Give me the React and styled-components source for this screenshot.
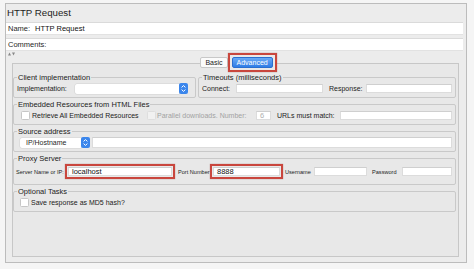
import React from "react";
import styled, { createGlobalStyle } from "styled-components";

const GlobalStyle = createGlobalStyle`
  html, body {
    margin: 0;
    padding: 0;
    background: #f5f5f5;
  }
  body {
    font-family: "Liberation Sans", Arial, sans-serif;
    color: #1f1f1f;
  }
`;

function Stepper() {
  return (
    <svg width="9" height="11" viewBox="0 0 9 11">
      <rect x="0" y="0" width="9" height="11" rx="2" fill="#3b86ec" />
      <path d="M2.6 4.4 L4.5 2.6 L6.4 4.4" stroke="#fff" strokeWidth="1" fill="none" />
      <path d="M2.6 6.6 L4.5 8.4 L6.4 6.6" stroke="#fff" strokeWidth="1" fill="none" />
    </svg>
  );
}

function App() {
  return (
    <>
      <GlobalStyle />
      <Window>
        <Panel>
          <Title>HTTP Request</Title>
          <TextRow>
            <RowLabel>Name:</RowLabel>
            <RowValue>HTTP Request</RowValue>
          </TextRow>
          <TextRow $gap={3}>
            <RowLabel>Comments:</RowLabel>
          </TextRow>
          <Spinner>
            <svg width="7" height="4" viewBox="0 0 7 4">
              <path d="M0 3.5 L1.5 0.5 L3 3.5 Z" fill="#888" />
              <path d="M4 0.5 L7 0.5 L5.5 3.5 Z" fill="#888" />
            </svg>
          </Spinner>
          <TabBar>
            <Tab>Basic</Tab>
            <Highlight $pad={2}>
              <Tab $active>Advanced</Tab>
            </Highlight>
          </TabBar>
          <TabPane>
            <Row $gap={2}>
              <Group $width={183}>
                <Legend>Client implementation</Legend>
                <Line>
                  <Label $w={58}>Implementation:</Label>
                  <Select $w={113}>
                    <SelectBox />
                    <Stepper />
                  </Select>
                </Line>
              </Group>
              <Group $grow>
                <Legend>Timeouts (milliseconds)</Legend>
                <Line $left={0}>
                  <Label $w={34}>Connect:</Label>
                  <Field $w={87} />
                  <Label $w={37} $ml={6}>Response:</Label>
                  <Field $grow />
                </Line>
              </Group>
            </Row>
            <Group>
              <Legend>Embedded Resources from HTML Files</Legend>
              <Line $left={4}>
                <Check />
                <Label $w={115} $ml={2}>Retrieve All Embedded Resources</Label>
                <Check $disabled />
                <Label $w={99} $ml={1} $muted>Parallel downloads. Number:</Label>
                <Field $w={15} $muted>6</Field>
                <Label $w={63} $ml={6}>URLs must match:</Label>
                <Field $grow />
              </Line>
            </Group>
            <Group>
              <Legend>Source address</Legend>
              <Line $left={3}>
                <Select $w={70}>
                  <SelectBox>IP/Hostname</SelectBox>
                  <Stepper />
                </Select>
                <Field $grow $ml={2} $h={11} />
              </Line>
            </Group>
            <Group $bottom={5}>
              <Legend>Proxy Server</Legend>
              <Line $left={-1}>
                <SmallLabel $w={49}>Server Name or IP:</SmallLabel>
                <Highlight $w={110}>
                  <Field $grow>localhost</Field>
                </Highlight>
                <SmallLabel $w={32} $ml={3}>Port Number:</SmallLabel>
                <Highlight $w={73}>
                  <Field $grow>8888</Field>
                </Highlight>
                <SmallLabel $w={29} $ml={2}>Username</SmallLabel>
                <Field $w={53} />
                <SmallLabel $w={30} $ml={5}>Password</SmallLabel>
                <Field $grow />
              </Line>
            </Group>
            <Group>
              <Legend>Optional Tasks</Legend>
              <Line $left={3}>
                <Check />
                <Label $ml={2}>Save response as MD5 hash?</Label>
              </Line>
            </Group>
          </TabPane>
        </Panel>
      </Window>
    </>
  );
}

export default App;

const Window = styled.div`
  height: 269px;
  box-sizing: border-box;
  padding: 3px 7px 6px 5px;
  display: flex;
`;

const Panel = styled.div`
  flex: 1;
  display: flex;
  flex-direction: column;
  border: 1px solid #bcbcbc;
  background: #ececec;
  padding: 0 3px 5px 0;
`;

const Title = styled.div`
  height: 18px;
  line-height: 18px;
  padding-left: 1px;
  font-size: 9.7px;
  color: #1d1d1d;
`;

const TextRow = styled.div`
  display: flex;
  align-items: center;
  height: 11px;
  margin-top: ${(p) => p.$gap || 0}px;
  background: #fff;
  border-top: 1px solid #dadada;
  border-bottom: 1px solid #e2e2e2;
  font-size: 7.5px;
  padding-left: 2px;
`;

const RowLabel = styled.span`
  width: 27px;
`;

const RowValue = styled.span`
  color: #111;
`;

const Spinner = styled.div`
  height: 4px;
  padding: 1px 0 0 2px;
  display: flex;
`;

const TabBar = styled.div`
  position: relative;
  z-index: 1;
  display: flex;
  justify-content: center;
  align-items: center;
  height: 13px;
  padding-left: 8px;
`;

const Tab = styled.div`
  height: 9px;
  line-height: 9px;
  padding: 0 4px;
  font-size: 7px;
  border-radius: 2px;
  color: ${(p) => (p.$active ? "#fff" : "#222")};
  background: ${(p) =>
    p.$active ? "linear-gradient(#69a9f6, #2f7de6)" : "#fbfbfb"};
  border: 1px solid ${(p) => (p.$active ? "#2a6fd0" : "#c8c8c8")};
  width: ${(p) => (p.$active ? "31px" : "auto")};
  text-align: center;
`;

const Highlight = styled.div`
  display: flex;
  align-items: center;
  box-sizing: border-box;
  width: ${(p) => (p.$w ? `${p.$w}px` : "auto")};
  padding: ${(p) => p.$pad || 1}px;
  border: 2px solid #c9463d;
  box-shadow: 0 0 1px rgba(120, 20, 10, 0.5);
  background: #e9e9e9;
`;

const TabPane = styled.div`
  flex: 1;
  margin: -6px 4px 0 6px;
  border: 1px solid #c7c7c7;
  background: #e8e8e8;
  padding: 9px 2px 0 0;
  display: flex;
  flex-direction: column;
  gap: 2px;
`;

const Row = styled.div`
  display: flex;
  gap: ${(p) => p.$gap}px;
`;

const Group = styled.fieldset`
  margin: 0;
  min-width: 0;
  box-sizing: border-box;
  width: ${(p) => (p.$width ? `${p.$width}px` : "auto")};
  flex: ${(p) => (p.$grow ? 1 : "none")};
  border: 1px solid #c9c9c9;
  border-radius: 2px;
  padding: 1px 3px ${(p) => p.$bottom || 3}px 3px;
`;

const Legend = styled.legend`
  font-size: 7.5px;
  line-height: 9px;
  padding: 0 1px;
  margin-left: 0;
  color: #222;
`;

const Line = styled.div`
  display: flex;
  align-items: center;
  min-height: 11px;
  margin-left: ${(p) => p.$left || 0}px;
`;

const Label = styled.span`
  flex: none;
  font-size: 7px;
  white-space: nowrap;
  width: ${(p) => (p.$w ? `${p.$w}px` : "auto")};
  margin-left: ${(p) => p.$ml || 0}px;
  color: ${(p) => (p.$muted ? "#a2a2a2" : "#222")};
`;

const SmallLabel = styled(Label)`
  font-size: 5.6px;
`;

const Field = styled.div`
  box-sizing: border-box;
  height: ${(p) => p.$h || 9}px;
  line-height: ${(p) => (p.$h || 9) - 1}px;
  width: ${(p) => (p.$w ? `${p.$w}px` : "auto")};
  flex: ${(p) => (p.$grow ? 1 : "none")};
  margin-left: ${(p) => p.$ml || 0}px;
  background: #fff;
  border: 1px solid #dcdcdc;
  border-top-color: #cfcfcf;
  font-size: 7.5px;
  padding-left: 3px;
  color: ${(p) => (p.$muted ? "#b0b0b0" : "#111")};
`;

const Select = styled.div`
  display: flex;
  align-items: center;
  width: ${(p) => p.$w}px;
  flex: none;
`;

const SelectBox = styled.div`
  flex: 1;
  height: 10px;
  line-height: 10px;
  background: #fff;
  border-radius: 2px 0 0 2px;
  box-shadow: 0 0 0 0.5px #d2d2d2;
  font-size: 7px;
  padding-left: 6px;
`;

const Check = styled.div`
  flex: none;
  width: 7px;
  height: 7px;
  border-radius: 1.5px;
  background: ${(p) => (p.$disabled ? "#f1f1f1" : "#fff")};
  border: 1px solid ${(p) => (p.$disabled ? "#dedede" : "#c6c6c6")};
`;
